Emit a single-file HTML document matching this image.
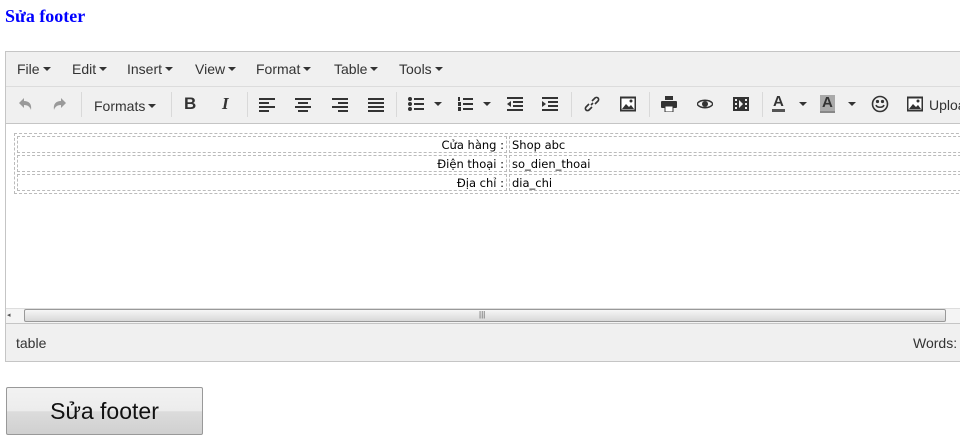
<!DOCTYPE html>
<html><head><meta charset="utf-8"><style>
*{margin:0;padding:0;box-sizing:border-box}
body{width:960px;height:443px;overflow:hidden;background:#fff;font-family:"Liberation Sans",Arial,sans-serif;position:relative}
.a{position:absolute}
h1{position:absolute;left:5px;top:6px;font:bold 18px "Liberation Serif",serif;color:#0000ff}
.ed{left:5px;top:51px;width:970px;height:311px;border:1px solid #c5c5c5;background:#f0f0f0}
.menu{font-size:14px;color:#333;top:61px;white-space:nowrap}
.car{display:inline-block;width:0;height:0;border-left:4px solid transparent;border-right:4px solid transparent;border-top:4px solid #333;vertical-align:middle;margin-left:3px;margin-top:-2px}
.tb{top:86px;left:6px;width:960px;height:1px;background:#dcdcdc}
.sep{top:92px;width:1px;height:25px;background:#d9d9d9}
.ic{top:96px;width:16px;height:16px}
.content{left:6px;top:123px;width:960px;height:185px;background:#fff;border-top:1px solid #c5c5c5;overflow:hidden}
table{position:absolute;left:8px;top:9px;width:1000px;border-collapse:separate;border-spacing:2px;border:1px dashed #bbb;font:12px "DejaVu Sans",Verdana,sans-serif;color:#000;table-layout:fixed}
td{border:1px dashed #bbb;height:17px;padding:0 2px;white-space:nowrap;font-size:11.5px;overflow:hidden}
td.l{text-align:right}
</style></head><body>
<h1>Sửa footer</h1>
<div class="a ed"></div>
<div class="a menu" style="left:17px">File<span class="car"></span></div>
<div class="a menu" style="left:72px">Edit<span class="car"></span></div>
<div class="a menu" style="left:127px">Insert<span class="car"></span></div>
<div class="a menu" style="left:195px">View<span class="car"></span></div>
<div class="a menu" style="left:256px">Format<span class="car"></span></div>
<div class="a menu" style="left:334px">Table<span class="car"></span></div>
<div class="a menu" style="left:399px">Tools<span class="car"></span></div>
<div class="a tb"></div>
<div class="a sep" style="left:81px"></div>
<div class="a sep" style="left:171px"></div>
<div class="a sep" style="left:247px"></div>
<div class="a sep" style="left:396px"></div>
<div class="a sep" style="left:571px"></div>
<div class="a sep" style="left:649px"></div>
<div class="a sep" style="left:762px"></div>
<svg class="a ic" style="left:17px" viewBox="0 0 16 16"><path d="M2 7l5-5v3c5 0 8 3 7 9-1-3-3-5-7-5v3z" fill="#9a9a9a"/></svg>
<svg class="a ic" style="left:52px" viewBox="0 0 16 16"><path d="M14 7l-5-5v3c-5 0-8 3-7 9 1-3 3-5 7-5v3z" fill="#9a9a9a"/></svg>
<div class="a menu" style="left:94px;top:98px">Formats<span class="car"></span></div>
<div class="a" style="left:184px;top:94px;font:bold 17px 'Liberation Sans';color:#333">B</div>
<div class="a" style="left:222px;top:94px;font:italic bold 17px 'Liberation Serif';color:#333">I</div>
<svg class="a ic" style="left:259px" viewBox="0 0 16 16" fill="#333"><rect x="0" y="2" width="16" height="2"/><rect x="0" y="6" width="10" height="2"/><rect x="0" y="10" width="16" height="2"/><rect x="0" y="14" width="10" height="2"/></svg>
<svg class="a ic" style="left:295px" viewBox="0 0 16 16" fill="#333"><rect x="0" y="2" width="16" height="2"/><rect x="3" y="6" width="10" height="2"/><rect x="0" y="10" width="16" height="2"/><rect x="3" y="14" width="10" height="2"/></svg>
<svg class="a ic" style="left:332px" viewBox="0 0 16 16" fill="#333"><rect x="0" y="2" width="16" height="2"/><rect x="6" y="6" width="10" height="2"/><rect x="0" y="10" width="16" height="2"/><rect x="6" y="14" width="10" height="2"/></svg>
<svg class="a ic" style="left:368px" viewBox="0 0 16 16" fill="#333"><rect x="0" y="2" width="16" height="2"/><rect x="0" y="6" width="16" height="2"/><rect x="0" y="10" width="16" height="2"/><rect x="0" y="14" width="16" height="2"/></svg>
<svg class="a ic" style="left:408px" viewBox="0 0 16 16" fill="#333"><circle cx="2" cy="3" r="2"/><circle cx="2" cy="8" r="2"/><circle cx="2" cy="13" r="2"/><rect x="6" y="2" width="10" height="2"/><rect x="6" y="7" width="10" height="2"/><rect x="6" y="12" width="10" height="2"/></svg>
<span class="a car" style="left:431px;top:104px"></span>
<svg class="a ic" style="left:457px" viewBox="0 0 16 16" fill="#333"><rect x="1" y="1" width="2" height="4"/><rect x="1" y="6" width="3" height="4"/><rect x="1" y="11" width="3" height="4"/><rect x="6" y="2" width="10" height="2"/><rect x="6" y="7" width="10" height="2"/><rect x="6" y="12" width="10" height="2"/></svg>
<span class="a car" style="left:480px;top:104px"></span>
<svg class="a ic" style="left:507px" viewBox="0 0 16 16" fill="#333"><rect x="0" y="1" width="16" height="2"/><rect x="6" y="5" width="10" height="2"/><rect x="6" y="9" width="10" height="2"/><rect x="0" y="13" width="16" height="2"/><path d="M0 8l4-3v6z"/></svg>
<svg class="a ic" style="left:542px" viewBox="0 0 16 16" fill="#333"><rect x="0" y="1" width="16" height="2"/><rect x="6" y="5" width="10" height="2"/><rect x="6" y="9" width="10" height="2"/><rect x="0" y="13" width="16" height="2"/><path d="M4 8l-4-3v6z"/></svg>
<svg class="a ic" style="left:584px" viewBox="0 0 16 16" fill="none" stroke="#333" stroke-width="1.6"><path d="M7 9l2-2M5 8l-3 3a2 2 0 003 3l3-3M11 8l3-3a2 2 0 00-3-3L8 5"/></svg>
<svg class="a ic" style="left:620px" viewBox="0 0 16 16"><rect x="0.5" y="1.5" width="15" height="13" fill="#fff" stroke="#333" stroke-width="2"/><path d="M2 13l4-5 3 3 2-2 3 4z" fill="#333"/><circle cx="11" cy="5" r="1.5" fill="#333"/></svg>
<svg class="a ic" style="left:661px" viewBox="0 0 16 16" fill="#333"><rect x="4" y="0" width="8" height="4"/><rect x="0" y="5" width="16" height="7" rx="1"/><rect x="4" y="10" width="8" height="6" fill="#fff" stroke="#333"/></svg>
<svg class="a ic" style="left:697px" viewBox="0 0 16 16"><path d="M0 8c3-5 13-5 16 0-3 5-13 5-16 0z" fill="none" stroke="#333" stroke-width="1.5"/><circle cx="8" cy="8" r="3" fill="#333"/></svg>
<svg class="a ic" style="left:733px" viewBox="0 0 16 16" fill="#333"><path d="M0 1h16v14H0zM2 3v2h2V3zm0 4v2h2V7zm0 4v2h2v-2zm10-8v2h2V3zm0 4v2h2V7zm0 4v2h2v-2zM6 4v8l4-4z" fill-rule="evenodd"/></svg>
<div class="a" style="left:772px;top:95px;font:bold 15px 'Liberation Sans';color:#333;border-bottom:3px solid #555;line-height:14px;padding:0 1px">A</div>
<span class="a car" style="left:796px;top:104px"></span>
<div class="a" style="left:820px;top:95px;font:bold 15px 'Liberation Sans';color:#333;background:#aaa;line-height:16px;padding:0 2px;border-bottom:2px solid #888">A</div>
<span class="a car" style="left:845px;top:104px"></span>
<svg class="a ic" style="left:871px;top:95px;width:18px;height:18px" viewBox="0 0 18 18" fill="none" stroke="#333" stroke-width="1.6"><circle cx="9" cy="9" r="7.5"/><path d="M5 10c1 3 7 3 8 0"/><circle cx="6.5" cy="6.5" r=".8" fill="#333"/><circle cx="11.5" cy="6.5" r=".8" fill="#333"/></svg>
<svg class="a ic" style="left:907px" viewBox="0 0 16 16"><rect x="0.5" y="1.5" width="15" height="13" fill="#fff" stroke="#333" stroke-width="2"/><path d="M2 13l4-5 3 3 2-2 3 4z" fill="#333"/><circle cx="11" cy="5" r="1.5" fill="#333"/></svg>
<div class="a" style="left:929px;top:97px;font-size:14px;color:#333;white-space:nowrap">Upload</div>
<div class="a content">
<table><colgroup><col style="width:490px"><col></colgroup><tr><td class="l">Cửa hàng :</td><td>Shop abc</td></tr>
<tr><td class="l">Điện thoại :</td><td>so_dien_thoai</td></tr>
<tr><td class="l">Địa chỉ :</td><td>dia_chi</td></tr></table>
</div>
<div class="a" style="left:6px;top:308px;width:960px;height:15px;background:#f4f4f4;border-top:1px solid #ddd"></div>
<div class="a" style="left:7px;top:311px;font-size:7px;color:#555">◂</div>
<div class="a" style="left:24px;top:309px;width:922px;height:13px;border:1px solid #999;border-radius:2px;background:linear-gradient(#f6f6f6,#d8d8d8)"></div>
<div class="a" style="left:479px;top:310px;font-size:8px;color:#555">|||</div>
<div class="a" style="left:6px;top:323px;width:960px;height:1px;background:#c5c5c5"></div>
<div class="a" style="left:16px;top:335px;font-size:14px;color:#333">table</div>
<div class="a" style="left:913px;top:335px;font-size:14px;color:#333;white-space:nowrap">Words: 9</div>
<div class="a" style="left:6px;top:387px;width:197px;height:48px;border:1px solid #999;border-radius:2px;background:linear-gradient(#f2f2f2 0,#ececec 50%,#dcdcdc 51%,#d0d0d0 100%);text-align:center;font-size:23px;line-height:46px;color:#111">Sửa footer</div>
</body></html>
